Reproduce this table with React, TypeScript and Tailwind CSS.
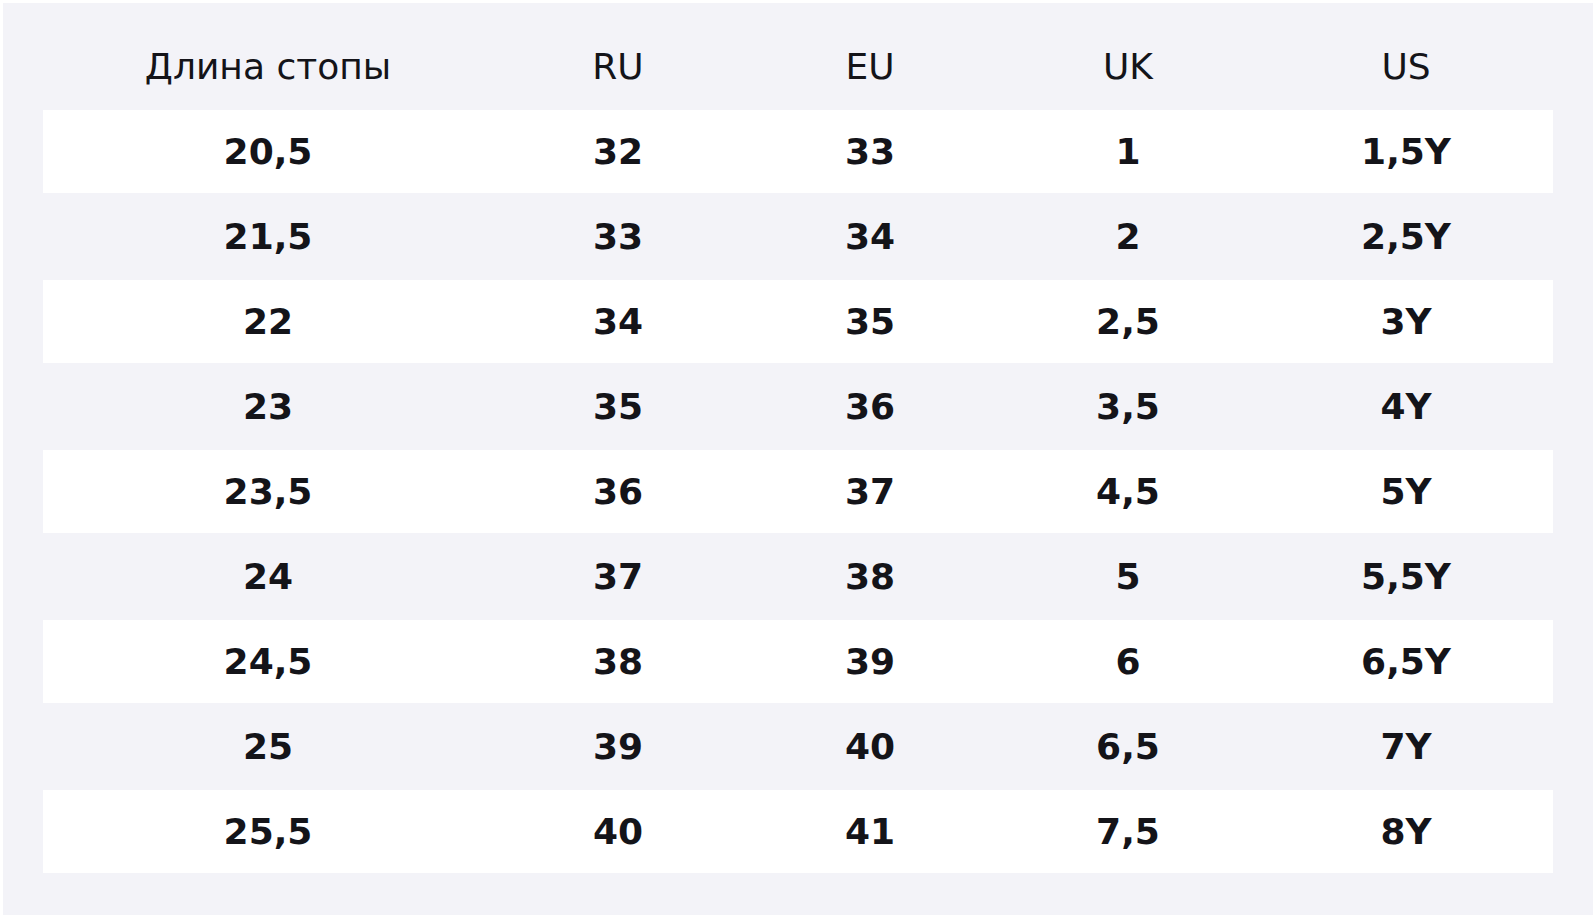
import React from "react";

const rows = [
  ["20,5", "32", "33", "1", "1,5Y"],
  ["21,5", "33", "34", "2", "2,5Y"],
  ["22", "34", "35", "2,5", "3Y"],
  ["23", "35", "36", "3,5", "4Y"],
  ["23,5", "36", "37", "4,5", "5Y"],
  ["24", "37", "38", "5", "5,5Y"],
  ["24,5", "38", "39", "6", "6,5Y"],
  ["25", "39", "40", "6,5", "7Y"],
  ["25,5", "40", "41", "7,5", "8Y"],
];

export default function App() {
  return (
    <div className="bg-white p-[3px] font-['DejaVu_Sans',sans-serif] text-[#141419]">
      {/* Size chart panel */}
      <div className="h-[912px] bg-[#f3f3f8] px-10 pt-5">
        <table className="w-[1510px] table-fixed border-collapse text-center text-[36px]">
          <colgroup>
            <col className="w-[450px]" />
            <col className="w-[250px]" />
            <col className="w-[254px]" />
            <col className="w-[262px]" />
            <col className="w-[294px]" />
          </colgroup>
          <thead>
            <tr className="h-[87px]">
              <th className="p-0 font-normal">Длина стопы</th>
              <th className="p-0 font-normal">RU</th>
              <th className="p-0 font-normal">EU</th>
              <th className="p-0 font-normal">UK</th>
              <th className="p-0 font-normal">US</th>
            </tr>
          </thead>
          <tbody className="font-bold">
            {rows.map((r, i) => (
              <tr key={i} className={i % 2 === 0 ? "h-[83px] bg-white" : "h-[87px]"}>
                {r.map((c, j) => (
                  <td key={j} className="p-0">
                    {c}
                  </td>
                ))}
              </tr>
            ))}
          </tbody>
        </table>
      </div>
    </div>
  );
}
